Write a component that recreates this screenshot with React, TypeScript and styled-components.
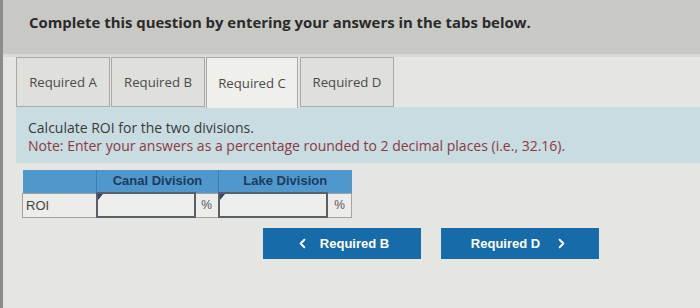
import React from 'react'
import styled, { createGlobalStyle } from 'styled-components'
import { ChevronLeft, ChevronRight } from 'lucide-react'

const GlobalStyle = createGlobalStyle`
  html, body {
    margin: 0;
    padding: 0;
    background: #e4e4e1;
  }
`

const tabs = ['Required A', 'Required B', 'Required C', 'Required D']
const activeTab = 'Required C'

const Page = styled.div`
  width: 700px;
  height: 308px;
  box-sizing: border-box;
  border-left: 3px solid #8c8c8a;
  background: #e5e5e2;
  overflow: hidden;
`

const Header = styled.div`
  height: 57px;
  box-sizing: border-box;
  padding: 12px 0 0 26px;
  background: #c8c8c5;
  border-bottom: 3px solid #d9d9d6;
  font-family: 'Open Sans', sans-serif;
  font-weight: 700;
  font-size: 14.9px;
  color: #2a2a2a;
`

const TabRow = styled.div`
  display: flex;
  align-items: flex-end;
  margin-left: 13px;
  height: 50px;
`

const Tab = styled.div<{ $active?: boolean }>`
  box-sizing: border-box;
  width: ${p => (p.$active ? 92 : 94)}px;
  height: ${p => (p.$active ? 51 : 50)}px;
  margin-right: ${p => (p.$active ? 2 : 1)}px;
  margin-bottom: ${p => (p.$active ? -1 : 0)}px;
  display: flex;
  align-items: center;
  justify-content: center;
  border: 1px solid #a9a9a7;
  border-bottom: ${p => (p.$active ? 'none' : '1px solid #a9a9a7')};
  background: ${p => (p.$active ? '#efefec' : '#dfdfdc')};
  font-family: 'Open Sans', sans-serif;
  font-size: 13.2px;
  color: #4a4a4a;
`

const Panel = styled.div`
  margin-left: 13px;
  height: 56px;
  box-sizing: border-box;
  padding: 12px 12px 0;
  background: #c8dce1;
  font-family: 'Open Sans', sans-serif;
  font-size: 14px;
  line-height: 18px;
  color: #3a3a3a;
`

const Note = styled.div`
  color: #8a3a40;
`

const Table = styled.table`
  margin: 7px 0 0 19px;
  border-collapse: collapse;
  font-family: 'Liberation Sans', Arial, sans-serif;
  font-size: 13px;

  th {
    height: 23px;
    padding: 0;
    background: #4f98cd;
    color: #1e3b5a;
    font-weight: 700;
    border-left: 1px solid #3f7faf;
    vertical-align: top;
    padding-top: 3px;
    box-sizing: border-box;
  }

  th:first-child {
    border-left: none;
  }

  td {
    height: 24px;
    padding: 0;
    background: #ecece9;
    border: 1px solid #a3a3a1;
    box-sizing: border-box;
  }
`

const Label = styled.td`
  width: 74px;
  padding-left: 3px !important;
  color: #444;
`

const InputCell = styled.td<{ $w: number }>`
  width: ${p => p.$w}px;
  position: relative;
  border: 2px solid #5a6066 !important;
  background: #eeeeeb !important;

  &::before {
    content: '';
    position: absolute;
    left: 0;
    top: 0;
    border-top: 6px solid #2c4a6a;
    border-right: 5px solid transparent;
  }
`

const Percent = styled.td`
  width: 24px;
  text-align: center;
  color: #555;
  font-size: 12px;
`

const ButtonRow = styled.div`
  display: flex;
  gap: 20px;
  margin: 10px 0 0 260px;
`

const NavButton = styled.button<{ $gap: number }>`
  width: 158px;
  height: 31px;
  display: flex;
  align-items: center;
  justify-content: center;
  gap: ${p => p.$gap}px;
  border: none;
  background: #176ba8;
  color: #ffffff;
  font-family: 'Liberation Sans', Arial, sans-serif;
  font-weight: 700;
  font-size: 13px;
  padding: 0;
`

export default function App() {
  return (
    <Page>
      <GlobalStyle />
      <Header>Complete this question by entering your answers in the tabs below.</Header>
      <TabRow>
        {tabs.map(t => (
          <Tab key={t} $active={t === activeTab}>{t}</Tab>
        ))}
      </TabRow>
      <Panel>
        <div>Calculate ROI for the two divisions.</div>
        <Note>Note: Enter your answers as a percentage rounded to 2 decimal places (i.e., 32.16).</Note>
      </Panel>
      <Table>
        <thead>
          <tr>
            <th style={{ width: 74 }}></th>
            <th colSpan={2} style={{ width: 122 }}>Canal Division</th>
            <th colSpan={2} style={{ width: 133 }}>Lake Division</th>
          </tr>
        </thead>
        <tbody>
          <tr>
            <Label>ROI</Label>
            <InputCell $w={98}></InputCell>
            <Percent>%</Percent>
            <InputCell $w={108}></InputCell>
            <Percent>%</Percent>
          </tr>
        </tbody>
      </Table>
      <ButtonRow>
        <NavButton $gap={10}>
          <ChevronLeft size={15} strokeWidth={3} />
          <span>Required B</span>
        </NavButton>
        <NavButton $gap={14}>
          <span>Required D</span>
          <ChevronRight size={15} strokeWidth={3} />
        </NavButton>
      </ButtonRow>
    </Page>
  )
}
